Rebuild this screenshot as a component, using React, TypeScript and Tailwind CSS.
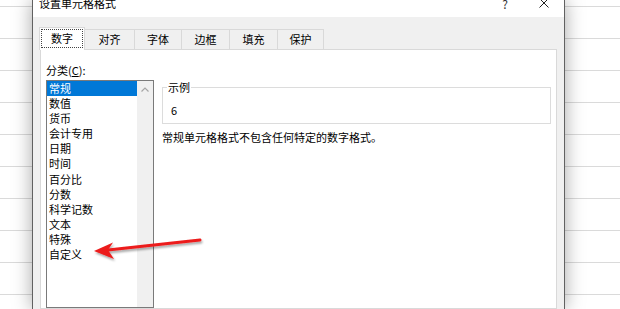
import React from 'react';

const categories = ['常规', '数值', '货币', '会计专用', '日期', '时间', '百分比', '分数', '科学记数', '文本', '特殊', '自定义'];
const tabs = [
    { label: '对齐', w: 'w-[50px]' },
    { label: '字体', w: 'w-[47px]' },
    { label: '边框', w: 'w-[48px]' },
    { label: '填充', w: 'w-[48px]' },
    { label: '保护', w: 'w-[46px]' },
];
const sheetRows = Array.from({ length: 9 });

const SheetStrip: React.FC<{ className?: string }> = ({ className }) => (
    <div className={`flex flex-col bg-white ${className ?? ''}`}>
        <div className="h-[7px] border-b border-[#dadada]" />
        {sheetRows.map((_, i) => (
            <div key={i} className="h-[32px] shrink-0 border-b border-[#dadada]" />
        ))}
    </div>
);

export default function App() {
    return (
        <div
            className="relative flex h-[309px] w-[620px] overflow-hidden bg-white text-[11px] text-black"
            style={{ fontFamily: '"Noto Sans CJK SC", "Noto Sans", sans-serif' }}
        >
            <SheetStrip className="w-[32px] shrink-0" />

            {/* dialog */}
            <div className="relative z-10 flex w-[533px] shrink-0 flex-col border-x border-[#616161] bg-[#f0f0f0] shadow-[0_0_18px_rgba(0,0,0,0.35)]">
                <div className="flex h-[17px] shrink-0 items-start bg-white pl-[6px]">
                    <span className="-mt-[4px] leading-[15px]">设置单元格格式</span>
                    <span className="ml-auto -mt-[4px] text-[12px] leading-[15px] text-[#333]">?</span>
                    <svg className="-mt-[2px] ml-[31px] mr-[15px]" width="10" height="10" viewBox="0 0 10 10">
                        <path d="M0.5 0.5 L9.5 9.5 M9.5 0.5 L0.5 9.5" stroke="#222" strokeWidth="1" />
                    </svg>
                </div>

                <div className="flex flex-1 flex-col px-[7px] pt-[10px]">
                    {/* tabs */}
                    <div className="flex h-[22px] items-end">
                        <div className="relative -mb-px ml-[-1px] h-[23px] w-[46px] border border-b-0 border-[#d9d9d9] bg-white p-[1px]">
                            <div className="flex h-[19px] items-center justify-center border border-dotted border-[#444]">数字</div>
                        </div>
                        {tabs.map((t) => (
                            <div
                                key={t.label}
                                className={`flex h-[20px] ${t.w} items-center justify-center border border-b-0 border-l-0 border-[#d9d9d9] bg-[#f0f0f0]`}
                            >
                                {t.label}
                            </div>
                        ))}
                    </div>

                    {/* panel */}
                    <div className="flex flex-1 flex-col border border-[#d9d9d9] bg-white pl-[5px] pr-[5px] pt-[13px]">
                        <div className="leading-[15px]">
                            分类(<span className="underline">C</span>):
                        </div>
                        <div className="mt-[2px] flex flex-1 gap-[8px]">
                            <div className="flex w-[108px] shrink-0 border border-[#7a7a7a]">
                                <div className="flex flex-1 flex-col">
                                    {categories.map((c, i) => (
                                        <div
                                            key={c}
                                            className={`h-[15.1px] pl-[2px] leading-[15px] ${i === 0 ? 'bg-[#0078d7] text-white' : ''}`}
                                        >
                                            {c}
                                        </div>
                                    ))}
                                </div>
                                <div className="flex w-[16px] justify-center bg-[#f0f0f0] pt-[6px]">
                                    <svg width="8" height="5" viewBox="0 0 8 5">
                                        <path d="M0.5 4.5 L4 1 L7.5 4.5" stroke="#a6a6a6" strokeWidth="1.2" fill="none" />
                                    </svg>
                                </div>
                            </div>

                            <div className="flex flex-1 flex-col">
                                <fieldset className="border border-[#dcdcdc] px-[4px] pb-[5px]">
                                    <legend className="px-[1px] leading-[15px]">示例</legend>
                                    <div className="pl-[4px] pt-[8px] leading-[15px]">6</div>
                                </fieldset>
                                <div className="mt-[6px] leading-[15px]">常规单元格格式不包含任何特定的数字格式。</div>
                            </div>
                        </div>
                    </div>
                </div>
            </div>

            <SheetStrip className="flex-1" />

            {/* annotation arrow */}
            <svg className="pointer-events-none absolute inset-0 z-20" width="620" height="309" viewBox="0 0 620 309">
                <defs>
                    <filter id="sh" x="-20%" y="-50%" width="140%" height="200%">
                        <feDropShadow dx="1" dy="2" stdDeviation="1.3" floodColor="#000" floodOpacity="0.35" />
                    </filter>
                </defs>
                <g filter="url(#sh)">
                    <path d="M200 240 L108 250" stroke="#ec1c1c" strokeWidth="3" strokeLinecap="round" />
                    <path d="M94 251 L113 242.5 L108 250 L114 259 Z" fill="#ec1c1c" />
                </g>
            </svg>
        </div>
    );
}
